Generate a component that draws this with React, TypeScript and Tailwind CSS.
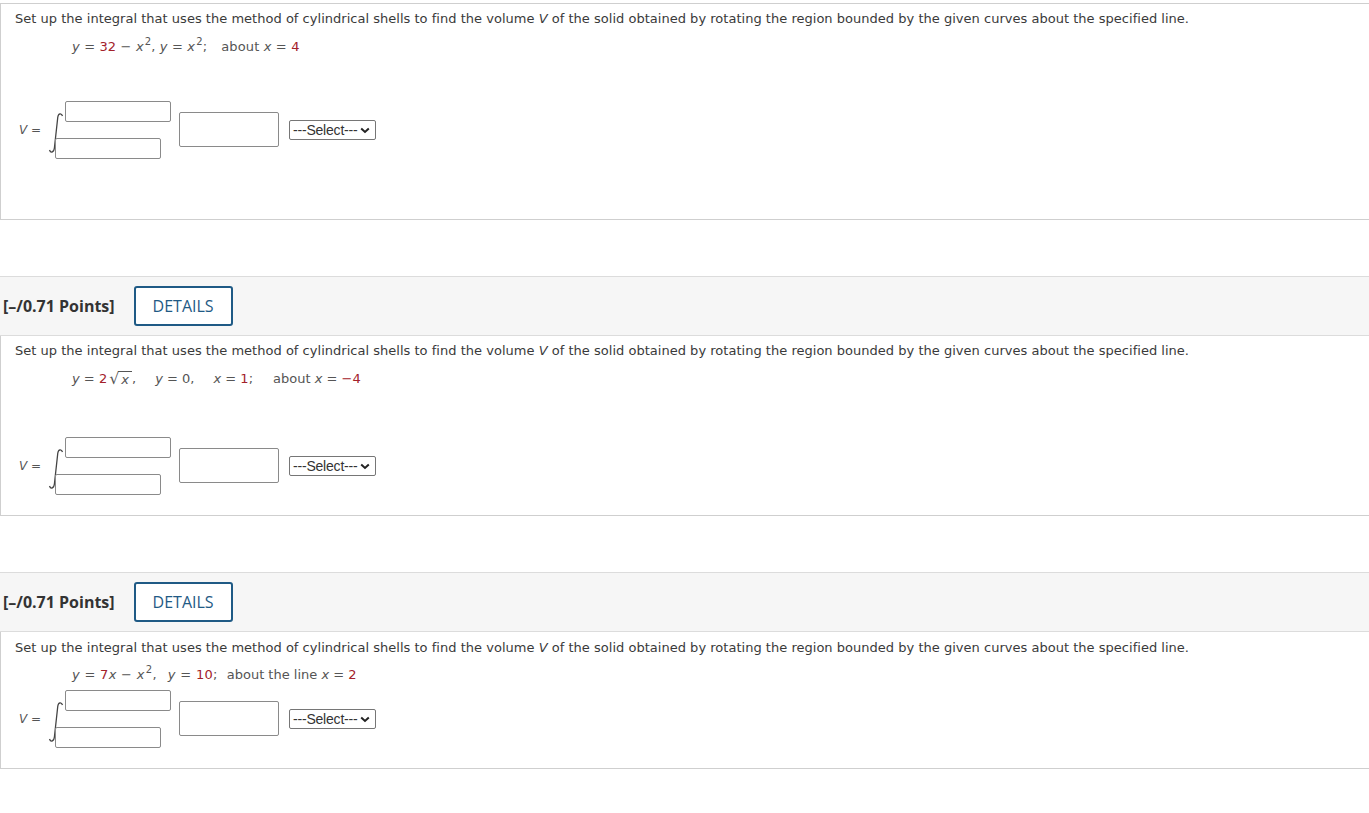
import React from "react";

const body = { fontFamily: '"DejaVu Sans", Verdana, sans-serif' };
const head = { fontFamily: '"Open Sans", sans-serif' };

const Red = ({ children }: { children: React.ReactNode }) => (
  <span className="text-[#a3212a]">{children}</span>
);
const I = ({ children }: { children: React.ReactNode }) => <i>{children}</i>;
const Sq = () => <sup className="relative -top-[5px] ml-[1px] text-[10px]">2</sup>;
const Gap = ({ w }: { w: string }) => <span className={`inline-block ${w}`} />;

const Integral = () => (
  <svg width="16" height="42" viewBox="0 0 16 42" className="mb-[5px] mr-[-9px] self-end">
    <path
      d="M14.5 4 C13.5 1, 10.5 1, 9.8 5 L6.4 36 C5.8 41, 2.5 41, 1.5 38"
      fill="none"
      stroke="#444"
      strokeWidth="1.3"
    />
  </svg>
);

const Select = () => (
  <div
    className="ml-[10px] flex h-[20px] w-[87px] items-center justify-between rounded-[2px] border border-[#767676] bg-white pl-[3px] pr-[5px] text-[14px] text-[#333]"
    style={{ fontFamily: '"Liberation Sans", Arial, sans-serif' }}
  >
    <span className="tracking-[-0.2px]">---Select---</span>
    <svg width="10" height="7" viewBox="0 0 10 7">
      <path d="M1.2 1.5 L5 5 L8.8 1.5" fill="none" stroke="#222" strokeWidth="2" />
    </svg>
  </div>
);

const AnswerRow = () => (
  <div className="ml-[4px] flex items-center">
    <span className="w-[29px] text-[12px] text-[#555]">
      <i>V</i> =
    </span>
    <Integral />
    <div className="flex flex-col gap-[16px]">
      <div className="ml-[10px] h-[21px] w-[106px] rounded-[2px] border border-[#8a8a8a] bg-white" />
      <div className="h-[21px] w-[106px] rounded-[2px] border border-[#8a8a8a] bg-white" />
    </div>
    <div className="ml-[8px] mb-[2px] h-[35px] w-[100px] rounded-[2px] border border-[#8a8a8a] bg-white" />
    <Select />
  </div>
);

const Prompt = () => (
  <p className="h-[18px] text-[13px] leading-[18px] tracking-[0.02px] text-[#3a3a3a]">
    Set up the integral that uses the method of cylindrical shells to find the volume <I>V</I> of the
    solid obtained by rotating the region bounded by the given curves about the specified line.
  </p>
);

const Header = () => (
  <div className="mt-[56px] flex h-[60px] items-center border-y border-[#dcdcdc] bg-[#f6f6f6] pl-[3px]" style={head}>
    <span className="text-[16px] font-bold text-[#333]">[–/0.71 Points]</span>
    <div className="ml-[19px] flex h-[40px] w-[99px] items-center justify-center rounded-[3px] border-2 border-[#1f5a85] bg-white text-[16px] text-[#1f5a85]">
      DETAILS
    </div>
  </div>
);

export default function App() {
  return (
    <div className="min-h-[813px] w-[1369px] overflow-hidden bg-white pt-[3px]" style={body}>
      {/* question 1 */}
      <div className="border-y border-l border-[#cfcfcf] pb-[60px] pl-[14px] pt-[6px]">
        <Prompt />
        <div className="ml-[57px] mt-[10px] flex h-[18px] items-center whitespace-pre text-[13px] leading-[18px] tracking-[0.15px] text-[#555]">
          <I>y</I> = <Red>32</Red> − <I>x</I>
          <Sq />, <I>y</I> = <I>x</I>
          <Sq />;<Gap w="w-[14px]" />about <I>x</I> = <Red>4</Red>
        </div>
        <div className="mt-[45px]">
          <AnswerRow />
        </div>
      </div>

      {/* question 2 */}
      <Header />
      <div className="border-b border-l border-[#cfcfcf] pb-[20px] pl-[14px] pt-[6px]">
        <Prompt />
        <div className="ml-[57px] mt-[10px] flex h-[18px] items-center whitespace-pre text-[13px] leading-[18px] text-[#555]">
          <I>y</I> = <Red>2</Red>
          <span className="ml-[2px] flex items-center">
            <span className="-mr-[1px] text-[16px] leading-[16px]">√</span>
            <span className="border-t border-[#555] px-[3px] leading-[15px]">
              <I>x</I>
            </span>
          </span>
          ,<Gap w="w-[19px]" />
          <I>y</I> = 0,<Gap w="w-[19px]" />
          <I>x</I> = <Red>1</Red>;<Gap w="w-[20px]" />about <I>x</I> = <Red>−4</Red>
        </div>
        <div className="mt-[49px]">
          <AnswerRow />
        </div>
      </div>

      {/* question 3 */}
      <Header />
      <div className="border-b border-l border-[#cfcfcf] pb-[20px] pl-[14px] pt-[7px]">
        <Prompt />
        <div className="ml-[57px] mt-[9px] flex h-[18px] items-center whitespace-pre text-[13px] leading-[18px] tracking-[0.3px] text-[#555]">
          <I>y</I> = <Red>7</Red>
          <I>x</I> − <I>x</I>
          <Sq />,<Gap w="w-[11px]" />
          <I>y</I> = <Red>10</Red>;<Gap w="w-[9px]" />
          <span className="tracking-normal">
            about the line <I>x</I> = <Red>2</Red>
          </span>
        </div>
        <div className="mt-[6px]">
          <AnswerRow />
        </div>
      </div>
    </div>
  );
}
